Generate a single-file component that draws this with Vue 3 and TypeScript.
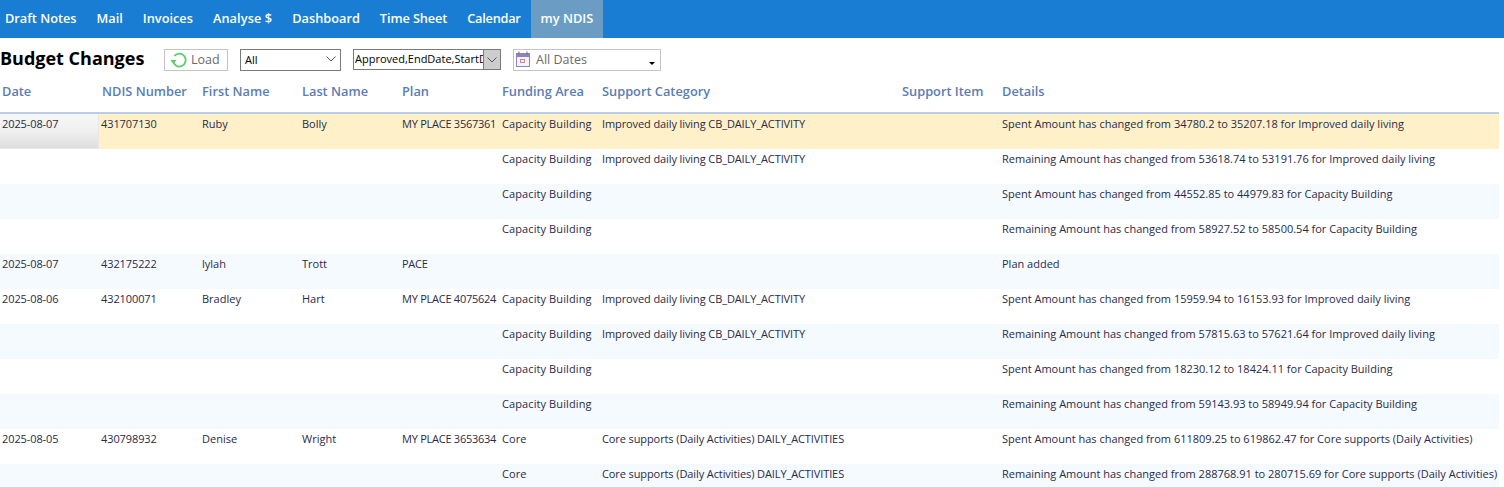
<template>
  <div class="page">
    <nav class="topbar">
      <a v-for="item in navItems" :key="item" class="nav-item" :class="{ 'nav-item--active': item === 'my NDIS' }">{{ item }}</a>
    </nav>
    <div class="toolbar">
      <h1 class="title">Budget Changes</h1>
      <button class="load-btn">
        <svg width="18" height="18" viewBox="0 0 18 18" fill="none">
          <path d="M4.4 5A6.4 6.4 0 1 1 3 10.2" stroke="#58cc66" stroke-width="1.8" />
          <path d="M0.4 9 L6.4 9 L3.4 13 Z" fill="#58cc66" />
        </svg>
        <span>Load</span>
      </button>
      <div class="select-all">
        <span>All</span>
        <svg width="10" height="6" viewBox="0 0 10 6" fill="none"><path d="M0.5 0.5 L5 5 L9.5 0.5" stroke="#555" /></svg>
      </div>
      <div class="select-multi">
        <span class="select-multi-text">Approved,EndDate,StartDate</span>
        <span class="select-multi-btn">
          <svg width="10" height="6" viewBox="0 0 10 6" fill="none"><path d="M0.5 0.5 L5 5 L9.5 0.5" stroke="#555" /></svg>
        </span>
      </div>
      <div class="date-range">
        <svg width="14" height="16" viewBox="0 0 14 16" fill="none">
          <rect x="0.5" y="2.5" width="13" height="13" fill="#f4f1f8" stroke="#8c86b8" />
          <rect x="0.5" y="2.5" width="13" height="3" fill="#8c86b8" stroke="#8c86b8" />
          <rect x="2.5" y="0.5" width="1" height="3" fill="#6d6699" />
          <rect x="10.5" y="0.5" width="1" height="3" fill="#6d6699" />
          <rect x="4.5" y="8.5" width="4" height="3" stroke="#c28a9a" />
        </svg>
        <span class="date-label">All Dates</span>
        <span class="caret"></span>
      </div>
    </div>
    <div class="grid-row grid-head">
      <div v-for="col in columns" :key="col" class="head-cell">{{ col }}</div>
    </div>
    <div class="head-rule"></div>
    <div
      v-for="(row, index) in rows"
      :key="index"
      class="grid-row body-row"
      :class="{ 'body-row--selected': index === 0, 'body-row--alt': index > 0 && index % 2 === 0 }"
    >
      <div class="cell cell--date" :class="{ 'cell--current': index === 0 }">{{ row.date }}</div>
      <div class="cell cell--ndis">{{ row.ndis }}</div>
      <div class="cell">{{ row.first }}</div>
      <div class="cell">{{ row.last }}</div>
      <div class="cell cell--plan">{{ row.plan }}</div>
      <div class="cell cell--area">{{ row.area }}</div>
      <div class="cell cell--category">{{ row.category }}</div>
      <div class="cell"></div>
      <div class="cell">{{ row.details }}</div>
    </div>
  </div>
</template>

<script setup lang="ts">
type Row = {
  date?: string;
  ndis?: string;
  first?: string;
  last?: string;
  plan?: string;
  area?: string;
  category?: string;
  details: string;
};

const navItems = ['Draft Notes', 'Mail', 'Invoices', 'Analyse $', 'Dashboard', 'Time Sheet', 'Calendar', 'my NDIS'];
const columns = ['Date', 'NDIS Number', 'First Name', 'Last Name', 'Plan', 'Funding Area', 'Support Category', 'Support Item', 'Details'];

const cb = 'Capacity Building';
const daily = 'Improved daily living CB_DAILY_ACTIVITY';
const core = 'Core supports (Daily Activities) DAILY_ACTIVITIES';

const rows: Row[] = [
  { date: '2025-08-07', ndis: '431707130', first: 'Ruby', last: 'Bolly', plan: 'MY PLACE 3567361', area: cb, category: daily, details: 'Spent Amount has changed from 34780.2 to 35207.18 for Improved daily living' },
  { area: cb, category: daily, details: 'Remaining Amount has changed from 53618.74 to 53191.76 for Improved daily living' },
  { area: cb, details: 'Spent Amount has changed from 44552.85 to 44979.83 for Capacity Building' },
  { area: cb, details: 'Remaining Amount has changed from 58927.52 to 58500.54 for Capacity Building' },
  { date: '2025-08-07', ndis: '432175222', first: 'lylah', last: 'Trott', plan: 'PACE', details: 'Plan added' },
  { date: '2025-08-06', ndis: '432100071', first: 'Bradley', last: 'Hart', plan: 'MY PLACE 4075624', area: cb, category: daily, details: 'Spent Amount has changed from 15959.94 to 16153.93 for Improved daily living' },
  { area: cb, category: daily, details: 'Remaining Amount has changed from 57815.63 to 57621.64 for Improved daily living' },
  { area: cb, details: 'Spent Amount has changed from 18230.12 to 18424.11 for Capacity Building' },
  { area: cb, details: 'Remaining Amount has changed from 59143.93 to 58949.94 for Capacity Building' },
  { date: '2025-08-05', ndis: '430798932', first: 'Denise', last: 'Wright', plan: 'MY PLACE 3653634', area: 'Core', category: core, details: 'Spent Amount has changed from 611809.25 to 619862.47 for Core supports (Daily Activities)' },
  { area: 'Core', category: core, details: 'Remaining Amount has changed from 288768.91 to 280715.69 for Core supports (Daily Activities)' },
];
</script>

<style>
html,
body {
  margin: 0;
  overflow: hidden;
  background: #fff;
}
</style>

<style scoped>
.page {
  width: 1504px;
  height: 487px;
  overflow: hidden;
  font-family: "Open Sans", "Noto Sans", sans-serif;
  color: #2a2a48;
}
.topbar {
  display: flex;
  height: 38px;
  background: #1a7dd4;
}
.nav-item {
  display: flex;
  align-items: center;
  padding: 0 10px 2px 10px;
  font-size: 12.75px;
  font-weight: 600;
  color: #fff;
}
.nav-item:first-child {
  padding-left: 5px;
}
.nav-item:nth-child(4) {
  letter-spacing: 0.1px;
}
.nav-item:nth-child(6) {
  letter-spacing: -0.1px;
}
.nav-item:nth-child(7) {
  letter-spacing: -0.25px;
}
.nav-item--active {
  background: #6b9dc4;
}
.toolbar {
  display: flex;
  align-items: flex-start;
  height: 40px;
  padding-top: 11px;
  box-sizing: border-box;
}
.title {
  margin: 0 20px 0 0;
  width: 144px;
  font-size: 18px;
  font-weight: 700;
  color: #000;
  line-height: 18px;
  white-space: nowrap;
}
.load-btn {
  display: flex;
  align-items: center;
  gap: 3px;
  box-sizing: border-box;
  width: 64px;
  height: 22px;
  margin: 0 12px 0 0;
  padding: 0 0 1px 5px;
  background: #fff;
  border: 1px solid #c4c4c4;
  font: inherit;
  font-size: 12.5px;
  color: #6b6b6b;
}
.select-all {
  display: flex;
  align-items: center;
  justify-content: space-between;
  box-sizing: border-box;
  width: 101px;
  height: 22px;
  margin-right: 12px;
  padding: 0 4px 2px 4px;
  border: 1px solid #7a7a7a;
  font-size: 11px;
  color: #000;
}
.select-multi {
  display: flex;
  box-sizing: border-box;
  width: 148px;
  height: 21px;
  margin-right: 12px;
  border: 1px solid #7a7a7a;
  font-size: 11px;
  color: #000;
}
.select-multi-text {
  flex: 1;
  overflow: hidden;
  white-space: nowrap;
  padding-left: 1px;
  line-height: 18px;
}
.select-multi-btn {
  display: flex;
  flex-shrink: 0;
  align-items: center;
  justify-content: center;
  box-sizing: border-box;
  width: 17px;
  background: #cdcdcd;
  border-left: 1px solid #7a7a7a;
}
.date-range {
  position: relative;
  display: flex;
  align-items: center;
  box-sizing: border-box;
  width: 148px;
  height: 22px;
  padding: 0 0 2px 2px;
  border: 1px solid #c4c4c4;
  font-size: 12.5px;
  color: #6b6b6b;
}
.date-label {
  margin-left: 6px;
}
.caret {
  position: absolute;
  right: 5px;
  bottom: 5px;
  border-left: 3px solid transparent;
  border-right: 3px solid transparent;
  border-top: 3px solid #000;
}
.grid-row {
  display: grid;
  grid-template-columns: 100px 100px 100px 100px 100px 100px 300px 100px 1fr;
  width: 1499px;
}
.grid-head {
  height: 34px;
  padding-bottom: 8px;
  box-sizing: border-box;
  align-items: center;
}
.head-cell {
  padding-left: 2px;
  font-size: 12.8px;
  font-weight: 600;
  color: #5a7db5;
  white-space: nowrap;
}
.head-rule {
  height: 2px;
  width: 1499px;
  background: #b9cde6;
}
.body-row {
  height: 35px;
}
.body-row--selected {
  background: #fef1c9;
}
.body-row--alt {
  background: #f5faff;
}
.cell {
  padding: 2px 0 0 2px;
  box-sizing: border-box;
  font-size: 11px;
  line-height: 15px;
  white-space: nowrap;
}
.cell--date {
  letter-spacing: -0.1px;
}
.cell--ndis {
  padding-left: 1px;
  letter-spacing: -0.1px;
}
.cell--plan {
  letter-spacing: -0.25px;
}
.cell--area {
  letter-spacing: 0.1px;
}
.cell--category {
  letter-spacing: -0.1px;
}
.cell--current {
  width: 99px;
  background: linear-gradient(#f6f6f6, #f0f0f0 50%, #dedede);
  border-right: 1px solid #e8e8e8;
  border-bottom: 1px solid #e8e8e8;
  border-radius: 1px;
}
</style>
